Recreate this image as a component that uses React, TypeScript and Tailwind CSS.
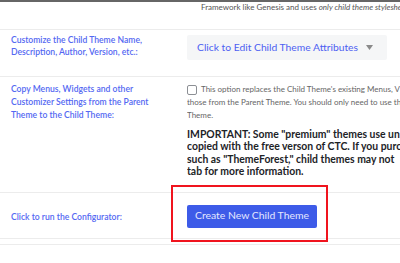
import React from "react";

const font = { fontFamily: 'Lato, "Noto Sans", sans-serif' };

export default function App() {
  return (
    <div className="w-[400px] h-[263px] overflow-hidden bg-white relative" style={font}>
      <div className="h-[2px] bg-[#666]" />
      {/* row 0 (partial) */}
      <div className="h-[28px] border-b border-[#ececec] flex">
        <div className="w-[201px] shrink-0" />
        <div className="flex-1 min-w-0 overflow-hidden whitespace-nowrap text-[8px] text-[#555] leading-[10px]">
          Framework like Genesis and uses <i>only child theme stylesheets</i>
        </div>
      </div>
      {/* row 1 */}
      <div className="h-[47px] border-b border-[#ececec] flex">
        <div className="w-[187px] shrink-0 pl-[11px] pt-[5px] text-[8.6px] leading-[11.5px] font-semibold text-[#5468f2]">
          Customize the Child Theme Name,<br />Description, Author, Version, etc.:
        </div>
        <div className="pt-[5px]">
          <div className="w-[200px] h-[25px] bg-[#f5f6f7] rounded-[2px] flex items-center pl-[10px] pr-[14px] justify-between">
            <span className="text-[10.3px] text-[#4d5ff2] whitespace-nowrap">Click to Edit Child Theme Attributes</span>
            <svg className="shrink-0" width="7" height="5" viewBox="0 0 7 5"><path d="M0 0h7L3.5 5z" fill="#8a8a8a" /></svg>
          </div>
        </div>
      </div>
      {/* row 2 */}
      <div className="h-[116px] border-b border-[#ececec] flex">
        <div className="w-[187px] shrink-0 pl-[11px] pt-[6px] text-[8.6px] leading-[13px] font-semibold text-[#5468f2]">
          Copy Menus, Widgets and other<br />Customizer Settings from the Parent<br />Theme to the Child Theme:
        </div>
        <div className="flex-1 min-w-0 overflow-hidden pt-[6px] whitespace-nowrap">
          <div className="flex items-center gap-[4px] h-[13px]">
            <div className="w-[10px] h-[10px] shrink-0 border border-[#8c8f94] rounded-[2px] bg-white" />
            <span className="text-[8px] text-[#666] leading-[13px]">This option replaces the Child Theme's existing Menus, V</span>
          </div>
          <div className="text-[8px] text-[#666] leading-[13px]">those from the Parent Theme. You should only need to use th</div>
          <div className="text-[8px] text-[#666] leading-[13px]">Theme.</div>
          <div className="mt-[6px] text-[10.4px] font-bold text-[#1d2327] leading-[12.3px]">
            <div>IMPORTANT: Some "premium" themes use un</div>
            <div>copied with the free verson of CTC. If you purc</div>
            <div>such as "ThemeForest," child themes may not</div>
            <div>tab for more information.</div>
          </div>
        </div>
      </div>
      {/* row 3 */}
      <div className="h-[46px] border-b border-[#ececec] flex items-center">
        <div className="w-[187px] shrink-0 pl-[11px] text-[8.6px] font-semibold text-[#5468f2] leading-[12px] pt-[2px]">
          Click to run the Configurator:
        </div>
        <div className="pt-[1px]">
          <div className="w-[130px] h-[23px] bg-[#3d5be8] rounded-[2px] flex items-center justify-center text-[10.4px] text-[#e4e7ff] whitespace-nowrap">
            Create New Child Theme
          </div>
        </div>
      </div>
      <div className="mt-[5px] border-t border-[#ececec]" />
      {/* red highlight */}
      <div className="absolute left-[171px] top-[185px] w-[157px] h-[57px] border-2 border-[#f0141e] pointer-events-none" />
    </div>
  );
}
